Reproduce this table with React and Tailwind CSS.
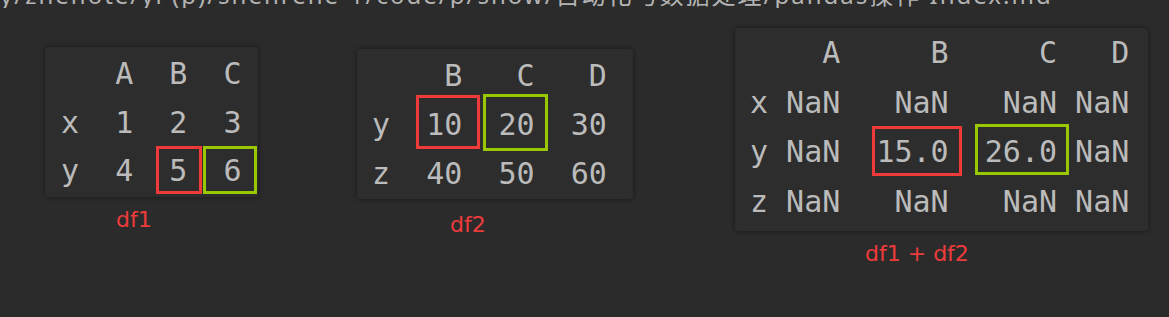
import React from "react";

function Panel({ lines, className, leading, children }) {
  return (
    <div
      className={`relative bg-[#2d2d2d] rounded-[3px] shadow-[0_0_5px_rgba(0,0,0,0.45)] text-[30px] text-[#bbbbbb] whitespace-pre font-['DejaVu_Sans_Mono',monospace] ${className}`}
    >
      {lines.map((l, i) => (
        <div key={i} className={leading}>
          {l}
        </div>
      ))}
      {children}
    </div>
  );
}

function Caption({ text, className }) {
  return (
    <div
      className={`text-[22px] leading-[28px] text-[#ef3b3b] whitespace-pre font-['DejaVu_Sans',sans-serif] ${className}`}
    >
      {text}
    </div>
  );
}

export default function App() {
  return (
    <div className="w-[1169px] h-[317px] bg-[#2b2b2b] overflow-hidden">
      <div className="h-[8px] overflow-hidden">
        <div className="mt-[-17px] text-[24px] leading-[24px] text-[#b4b4b4] whitespace-pre font-['Noto_Sans','Noto_Sans_CJK_SC',sans-serif] tracking-[2px]">
          {"y/zhenote/yl (p)/shenrene-1/code/p/show/自动化与数据处理/pandas操作 Index.md"}
        </div>
      </div>
      <div className="flex items-start">
        <div className="ml-[45px] mt-[39px] flex flex-col">
          <Panel
            className="w-[213px] pl-[16px] pt-[3px] pb-[1px]"
            leading="leading-[48.6px]"
            lines={["   A  B  C", "x  1  2  3", "y  4  5  6"]}
          >
            <div className="absolute left-[111px] top-[99px] w-[46px] h-[48px] border-[3px] border-[#f03a3a]" />
            <div className="absolute left-[158px] top-[99px] w-[54px] h-[48px] border-[3px] border-[#99c800]" />
          </Panel>
          <Caption text="df1" className="mt-[9px] ml-[71px]" />
        </div>
        <div className="ml-[99px] mt-[41px] flex flex-col">
          <Panel
            className="w-[276px] pl-[15px] pt-[2px] pb-[1px]"
            leading="leading-[49px]"
            lines={["    B   C   D", "y  10  20  30", "z  40  50  60"]}
          >
            <div className="absolute left-[59px] top-[46px] w-[64px] h-[54px] border-[3px] border-[#f03a3a]" />
            <div className="absolute left-[126px] top-[45px] w-[65px] h-[57px] border-[3px] border-[#99c800]" />
          </Panel>
          <Caption text="df2" className="mt-[12px] ml-[93px]" />
        </div>
        <div className="ml-[102px] mt-[20px] flex flex-col">
          <Panel
            className="w-[413px] pl-[15px] pt-[0px] pb-[4px]"
            leading="leading-[49.7px]"
            lines={[
              "    A     B     C   D",
              "x NaN   NaN   NaN NaN",
              "y NaN  15.0  26.0 NaN",
              "z NaN   NaN   NaN NaN",
            ]}
          >
            <div className="absolute left-[137px] top-[98px] w-[90px] h-[50px] border-[3px] border-[#f03a3a]" />
            <div className="absolute left-[240px] top-[96px] w-[94px] h-[51px] border-[3px] border-[#99c800]" />
          </Panel>
          <Caption text="df1 + df2" className="mt-[9px] ml-[130px]" />
        </div>
      </div>
    </div>
  );
}
